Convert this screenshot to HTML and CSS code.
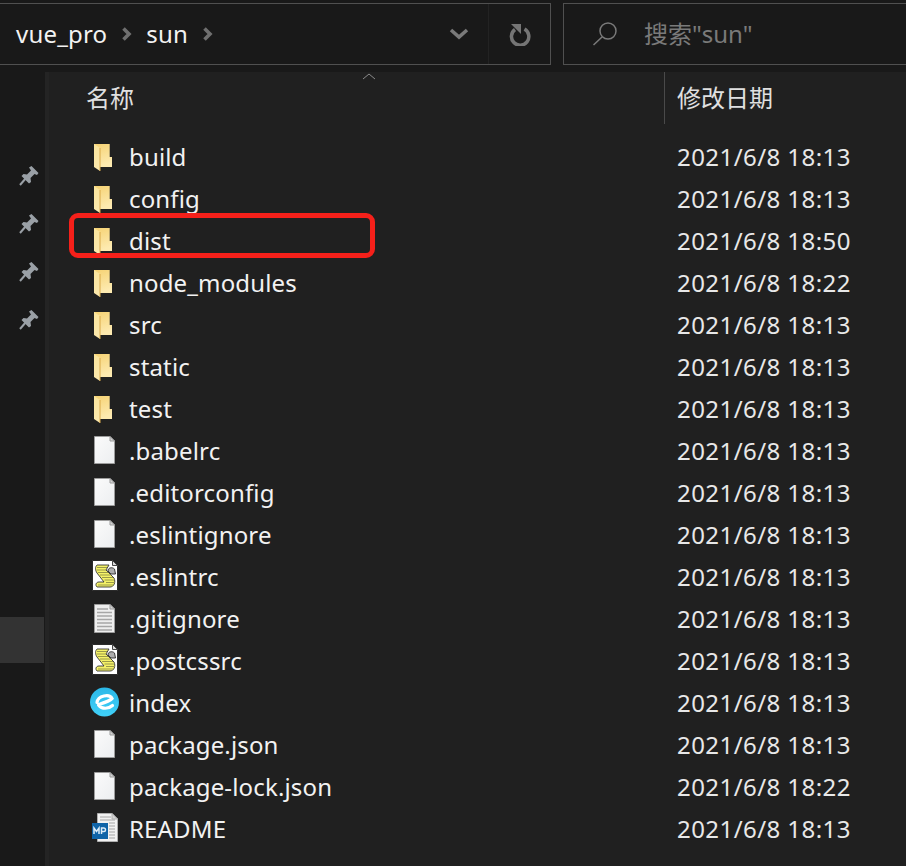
FILE: index.html
```html
<!DOCTYPE html>
<html lang="zh">
<head>
<meta charset="utf-8">
<title>sun</title>
<link rel="stylesheet" href="styles.css">
</head>
<body>
<svg class="defs" width="0" height="0" aria-hidden="true">
  <defs>
    <linearGradient id="fold" x1="0" y1="0" x2="0.3" y2="1"><stop offset="0" stop-color="#f6d272"/><stop offset="1" stop-color="#fdeab0"/></linearGradient>
    <linearGradient id="flap" x1="0" y1="0" x2="0" y2="1"><stop offset="0" stop-color="#fbe59d"/><stop offset="1" stop-color="#fbe8ad"/></linearGradient>
    <linearGradient id="blue" x1="0" y1="0" x2="0" y2="1"><stop offset="0" stop-color="#2bb8e8"/><stop offset="1" stop-color="#40d0f8"/></linearGradient>
    <linearGradient id="page" x1="0" y1="0" x2="1" y2="1"><stop offset="0" stop-color="#fbfbfb"/><stop offset="1" stop-color="#eceef0"/></linearGradient>
    <symbol id="folder" viewBox="0 0 30 34">
      <path d="M5 4H20.700V17H23V27H5Z" fill="url(#fold)"/>
      <path d="M5 4L11 8V31L5 27Z" fill="url(#flap)"/>
      <path d="M11 8V31" stroke="#d9a94a" stroke-width="1"/>
    </symbol>
    <symbol id="file" viewBox="0 0 30 34">
      <path d="M5.500 2.500H21L25.500 7V29.500H5.500Z" fill="url(#page)" stroke="#9c9c9c"/>
      <path d="M21 2.500V7H25.500Z" fill="#d4d4d4" stroke="#9c9c9c"/>
    </symbol>
    <symbol id="text" viewBox="0 0 30 34">
      <path d="M5.500 2.500H21L25.500 7V30.500H5.500Z" fill="#eeeeee" stroke="#9c9c9c"/>
      <path d="M21 2.500V7H25.500Z" fill="#d4d4d4" stroke="#9c9c9c"/>
      <path d="M8 7H19M8 10.500H23M8 14H23M8 17.500H23M8 21H23M8 24.500H23M8 28H23" stroke="#a6a6a6" stroke-width="1.300"/>
    </symbol>
    <symbol id="script" viewBox="0 0 30 34">
      <path d="M3.500 0.500H23.500L28.500 5.500V30.500H3.500Z" fill="#ffffff" stroke="#2a2a2a"/>
      <path d="M23.500 0.500V5.500H28.500Z" fill="#d8d8d8" stroke="#444444"/>
      <path d="M8 5H20L17 10L25 18C27 22 25 27 21 27H8C6 25 7 22 10 22H15L8 13C6 10 6 7 8 5Z" fill="#f5f268" stroke="#333333" stroke-width="0.900"/>
      <path d="M8 7.500H18M7.500 10H17M9 12.500H19M11 15H21.500M13 17.500H24M15.500 20H25M17 22.500H25.500M9 25H24.500" stroke="#9a9a48" stroke-width="1"/>
      <path d="M19 11C18.500 8 23 6.500 25.500 9L26.500 14H22Z" fill="#adadad" stroke="#2a2a2a" stroke-width="0.900"/>
    </symbol>
    <symbol id="edge" viewBox="0 0 30 34">
      <circle cx="15.500" cy="16" r="14.500" fill="url(#blue)"/>
      <path d="M8 16.500C9 9.500 20.500 7.500 23 12.500C20.500 15 15 16.800 10 18.500M9.500 19C13 23.500 19.500 23 23.500 19.500" fill="none" stroke="#ffffff" stroke-width="3.200" stroke-linecap="round"/>
    </symbol>
    <symbol id="md" viewBox="0 0 30 34">
      <path d="M8.500 1.500H23L28.500 7V29.500H8.500Z" fill="#f2f2f2" stroke="#b0b0b0"/>
      <path d="M23 1.500V7H28.500Z" fill="#d5d5d5" stroke="#b0b0b0"/>
      <path d="M11 5H22M11 8H26M20 11H26M20 14H26M20 17H26M20 20H26M20 23H26M20 26H26" stroke="#a5a5a5" stroke-width="1.200"/>
      <rect x="3" y="11" width="16" height="16" fill="#0f64a8"/>
      <path d="M5 22V16L7.500 19.500L10 16V22M12.500 22V16H15C17 16 17 19.500 15 19.500H12.500" fill="none" stroke="#dcecf8" stroke-width="1.500"/>
    </symbol>
    <symbol id="pin" viewBox="0 0 22 22">
      <path d="M2 20L8 13" stroke="#9aa0a6" stroke-width="2"/>
      <path d="M11 2.500L13.500 1L20.500 8L19 10L16.500 9L12.500 13L13 17L11 18.500L3.500 11L5.500 9L9 9.500L13 5.500Z" fill="#9aa0a6"/>
    </symbol>
  </defs>
</svg>
<div class="window">
  <header class="top">
    <div class="address">
      <div class="crumbs">
        <span class="crumb">vue_pro</span>
        <svg class="chev" viewBox="0 0 10 14"><path d="M1.500 1.500L7 7L1.500 12.500" fill="none" stroke="#6f6f6f" stroke-width="3.600"/></svg>
        <span class="crumb">sun</span>
        <svg class="chev" viewBox="0 0 10 14"><path d="M1.500 1.500L7 7L1.500 12.500" fill="none" stroke="#6f6f6f" stroke-width="3.600"/></svg>
      </div>
      <div class="drop">
        <svg class="down" viewBox="0 0 20 12"><path d="M2 2L10 9L18 2" fill="none" stroke="#7a7a7a" stroke-width="3.600"/></svg>
      </div>
      <div class="refresh">
        <svg class="reload" viewBox="0 0 22 24"><path d="M6 7.500A8.700 8.700 0 1 0 15.500 7" fill="none" stroke="#757575" stroke-width="3.500"/><path d="M2 2H12V12Z" fill="#757575"/></svg>
      </div>
    </div>
    <div class="search">
      <svg class="lens" viewBox="0 0 26 26"><circle cx="16" cy="10" r="8" fill="none" stroke="#7a7a7a" stroke-width="1.500"/><path d="M10 16L1.500 24" stroke="#7a7a7a" stroke-width="1.500"/></svg>
      <span class="search-text">搜索"sun"</span>
    </div>
  </header>
  <div class="main">
    <nav class="nav">
      <ul class="pins">
        <li><svg class="pin"><use href="#pin"/></svg></li>
        <li><svg class="pin"><use href="#pin"/></svg></li>
        <li><svg class="pin"><use href="#pin"/></svg></li>
        <li><svg class="pin"><use href="#pin"/></svg></li>
      </ul>
      <div class="nav-selected"></div>
    </nav>
    <section class="content">
      <div class="head">
        <svg class="sort" viewBox="0 0 14 7"><path d="M1 6L7 1L13 6" fill="none" stroke="#8a8a8a"/></svg>
        <div class="col-name">名称</div>
        <div class="col-date">修改日期</div>
      </div>
      <ul class="list">
        <li class="row"><svg class="ic"><use href="#folder"/></svg><span class="name">build</span><span class="date">2021/6/8 18:13</span></li>
        <li class="row"><svg class="ic"><use href="#folder"/></svg><span class="name">config</span><span class="date">2021/6/8 18:13</span></li>
        <li class="row"><svg class="ic"><use href="#folder"/></svg><span class="name">dist</span><span class="date">2021/6/8 18:50</span><div class="mark"></div></li>
        <li class="row"><svg class="ic"><use href="#folder"/></svg><span class="name">node_modules</span><span class="date">2021/6/8 18:22</span></li>
        <li class="row"><svg class="ic"><use href="#folder"/></svg><span class="name">src</span><span class="date">2021/6/8 18:13</span></li>
        <li class="row"><svg class="ic"><use href="#folder"/></svg><span class="name">static</span><span class="date">2021/6/8 18:13</span></li>
        <li class="row"><svg class="ic"><use href="#folder"/></svg><span class="name">test</span><span class="date">2021/6/8 18:13</span></li>
        <li class="row"><svg class="ic"><use href="#file"/></svg><span class="name">.babelrc</span><span class="date">2021/6/8 18:13</span></li>
        <li class="row"><svg class="ic"><use href="#file"/></svg><span class="name">.editorconfig</span><span class="date">2021/6/8 18:13</span></li>
        <li class="row"><svg class="ic"><use href="#file"/></svg><span class="name">.eslintignore</span><span class="date">2021/6/8 18:13</span></li>
        <li class="row"><svg class="ic"><use href="#script"/></svg><span class="name">.eslintrc</span><span class="date">2021/6/8 18:13</span></li>
        <li class="row"><svg class="ic"><use href="#text"/></svg><span class="name">.gitignore</span><span class="date">2021/6/8 18:13</span></li>
        <li class="row"><svg class="ic"><use href="#script"/></svg><span class="name">.postcssrc</span><span class="date">2021/6/8 18:13</span></li>
        <li class="row"><svg class="ic"><use href="#edge"/></svg><span class="name">index</span><span class="date">2021/6/8 18:13</span></li>
        <li class="row"><svg class="ic"><use href="#file"/></svg><span class="name">package.json</span><span class="date">2021/6/8 18:13</span></li>
        <li class="row"><svg class="ic"><use href="#file"/></svg><span class="name">package-lock.json</span><span class="date">2021/6/8 18:22</span></li>
        <li class="row"><svg class="ic"><use href="#md"/></svg><span class="name">README</span><span class="date">2021/6/8 18:13</span></li>
      </ul>
    </section>
  </div>
</div>
</body>
</html>
```
FILE: styles.css
```css
* { box-sizing: border-box; }
html, body { margin: 0; padding: 0; background: #191919; }
body { font-family: "Noto Sans", "Noto Sans CJK SC", sans-serif; font-size: 24px; color: #f2f2f2; overflow: hidden; }
ul { list-style: none; margin: 0; padding: 0; }
.defs { position: absolute; }
.window { width: 906px; height: 866px; display: flex; flex-direction: column; background: #191919; overflow: hidden; }

.top { height: 72px; flex: none; display: flex; gap: 12px; padding-top: 3px; align-items: flex-start; margin-left: -1px; }
.address { width: 552px; height: 62px; flex: none; border: 1px solid #505050; display: flex; align-items: center; }
.crumbs { flex: 1; display: flex; align-items: center; padding-left: 16px; }
.crumb { line-height: 60px; white-space: nowrap; letter-spacing: 0.2px; }
.chev { width: 10px; height: 14px; margin: 0 14px 0 15px; }
.drop { width: 60px; height: 60px; display: flex; align-items: center; justify-content: center; border-right: 1px solid #232323; }
.down { width: 20px; height: 12px; }
.refresh { width: 61px; height: 60px; display: flex; align-items: center; justify-content: center; }
.reload { width: 22px; height: 24px; }
.search { width: 350px; height: 62px; flex: none; border: 1px solid #505050; display: flex; align-items: center; padding-left: 28px; gap: 26px; }
.lens { width: 26px; height: 26px; }
.search-text { color: #7a7a7a; white-space: nowrap; padding-bottom: 4px; }

.main { flex: 1; display: flex; min-height: 0; }
.nav { width: 49px; flex: none; border-right: 4px solid #242424; background: #191919; display: flex; flex-direction: column; }
.pins { padding-top: 93px; display: flex; flex-direction: column; gap: 24px; align-items: center; padding-left: 13px; width: 45px; }
.pins li { height: 24px; }
.pin { width: 22px; height: 22px; display: block; }
.nav-selected { width: 44px; height: 46px; background: #333333; margin-top: 284px; }

.content { flex: 1; background: #202020; min-width: 0; }
.head { height: 52px; display: flex; position: relative; }
.sort { position: absolute; left: 313px; top: 1px; width: 14px; height: 7px; }
.col-name { width: 615px; padding-left: 37px; line-height: 52px; color: #e0e0e0; }
.col-date { flex: 1; border-left: 1px solid #4a4a4a; padding-left: 12px; line-height: 52px; color: #e0e0e0; }

.list { padding-top: 11px; }
.row { height: 42px; display: flex; align-items: center; position: relative; padding-left: 40px; }
.ic { width: 30px; height: 34px; flex: none; margin-top: 2px; }
.name { margin-left: 10px; width: 548px; white-space: nowrap; letter-spacing: 0.15px; }
.date { white-space: nowrap; color: #e8e8e8; letter-spacing: 0.43px; }
.mark { position: absolute; left: 20px; top: -6px; width: 306px; height: 45px; border: 5px solid #f5201a; border-radius: 9px; }
```
